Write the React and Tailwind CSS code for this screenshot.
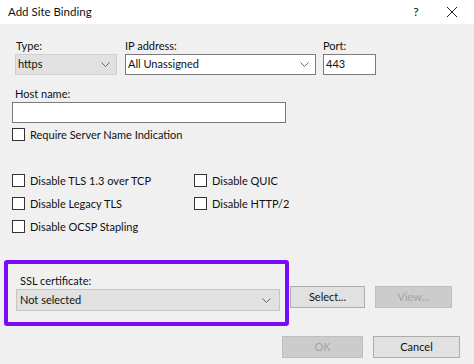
import React from 'react';

const Chevron = () => (
    <svg width="9" height="5" viewBox="0 0 9 5" className="shrink-0">
        <path d="M0.5 0.5 L4.5 4.5 L8.5 0.5" fill="none" stroke="#666" strokeWidth="1" />
    </svg>
);

const Checkbox = ({ label }) => (
    <label className="flex items-center h-[16px]">
        <span className="w-[13px] h-[13px] border border-[#333] bg-white shrink-0" />
        <span className="ml-[5px] leading-none">{label}</span>
    </label>
);

const App = () => {
    return (
        <div className="w-[474px] h-[364px] bg-[#f0f0f0] text-[11px] text-[#111] font-['Segoe_UI','Lato',sans-serif] overflow-hidden">
            {/* title bar */}
            <div className="h-[24px] bg-white flex items-center pl-[8px] text-[11.5px]">
                <span className="flex-1">Add Site Binding</span>
                <span className="w-[20px] text-center mr-[20px] text-[12px]">?</span>
                <svg width="12" height="12" viewBox="0 0 12 12" className="mr-[16px]">
                    <path d="M1 1 L11 11 M11 1 L1 11" stroke="#222" strokeWidth="1" />
                </svg>
            </div>

            <div className="pt-[14px]">
                {/* type / ip / port */}
                <div className="flex items-end">
                    <div className="ml-[15px] w-[102px]">
                        <div className="h-[15px] leading-[15px] ml-[1px]">Type:</div>
                        <div className="mt-[1px] h-[21px] bg-[#e1e1e1] border border-[#cfcfcf] flex items-center pl-[2px] pr-[6px]">
                            <span className="flex-1">https</span>
                            <Chevron />
                        </div>
                    </div>
                    <div className="ml-[8px] w-[191px]">
                        <div className="h-[15px] leading-[15px]">IP address:</div>
                        <div className="mt-[1px] h-[21px] bg-white border border-[#7a7a7a] flex items-center pl-[2px] pr-[6px]">
                            <span className="flex-1">All Unassigned</span>
                            <Chevron />
                        </div>
                    </div>
                    <div className="ml-[7px] w-[53px]">
                        <div className="h-[15px] leading-[15px]">Port:</div>
                        <div className="mt-[1px] h-[21px] bg-white border border-[#7a7a7a] flex items-center pl-[2px]">
                            443
                        </div>
                    </div>
                </div>

                {/* host name */}
                <div className="ml-[12px] mt-[11px]">
                    <div className="h-[15px] leading-[15px] ml-[3px]">Host name:</div>
                    <div className="mt-[1px] w-[274px] h-[21px] bg-white border border-[#7a7a7a]" />
                </div>

                <div className="ml-[12px] mt-[3px]">
                    <Checkbox label="Require Server Name Indication" />
                </div>

                {/* protocol options */}
                <div className="ml-[12px] mt-[30px] grid grid-cols-[182px_1fr] gap-y-[7px]">
                    <Checkbox label="Disable TLS 1.3 over TCP" />
                    <Checkbox label="Disable QUIC" />
                    <Checkbox label="Disable Legacy TLS" />
                    <Checkbox label="Disable HTTP/2" />
                    <Checkbox label="Disable OCSP Stapling" />
                </div>

                {/* certificate */}
                <div className="flex items-start mt-[26px]">
                    <div className="ml-[4px] w-[285px] h-[66px] border-[4px] border-[#7a0af8] rounded-[3px] pl-[8px] pr-[5px] pt-[9px]">
                        <div className="h-[15px] leading-[15px] ml-[4px]">SSL certificate:</div>
                        <div className="mt-[1px] h-[22px] bg-[#e1e1e1] border border-[#c8c8c8] flex items-center pl-[3px] pr-[8px]">
                            <span className="flex-1">Not selected</span>
                            <Chevron />
                        </div>
                    </div>
                    <button className="mt-[26px] ml-[1px] w-[75px] h-[22px] bg-[#e1e1e1] border border-[#adadad]">
                        Select...
                    </button>
                    <button className="mt-[26px] ml-[10px] w-[77px] h-[22px] bg-[#cccccc] border border-[#bfbfbf] text-[#a3a3a3]">
                        View...
                    </button>
                </div>

                <div className="flex justify-end mt-[10px] pr-[14px]">
                    <button className="w-[81px] h-[22px] bg-[#cccccc] border border-[#bfbfbf] text-[#a3a3a3]">
                        OK
                    </button>
                    <button className="ml-[10px] w-[87px] h-[22px] bg-[#e1e1e1] border border-[#adadad]">
                        Cancel
                    </button>
                </div>
            </div>
        </div>
    );
};

export default App;
